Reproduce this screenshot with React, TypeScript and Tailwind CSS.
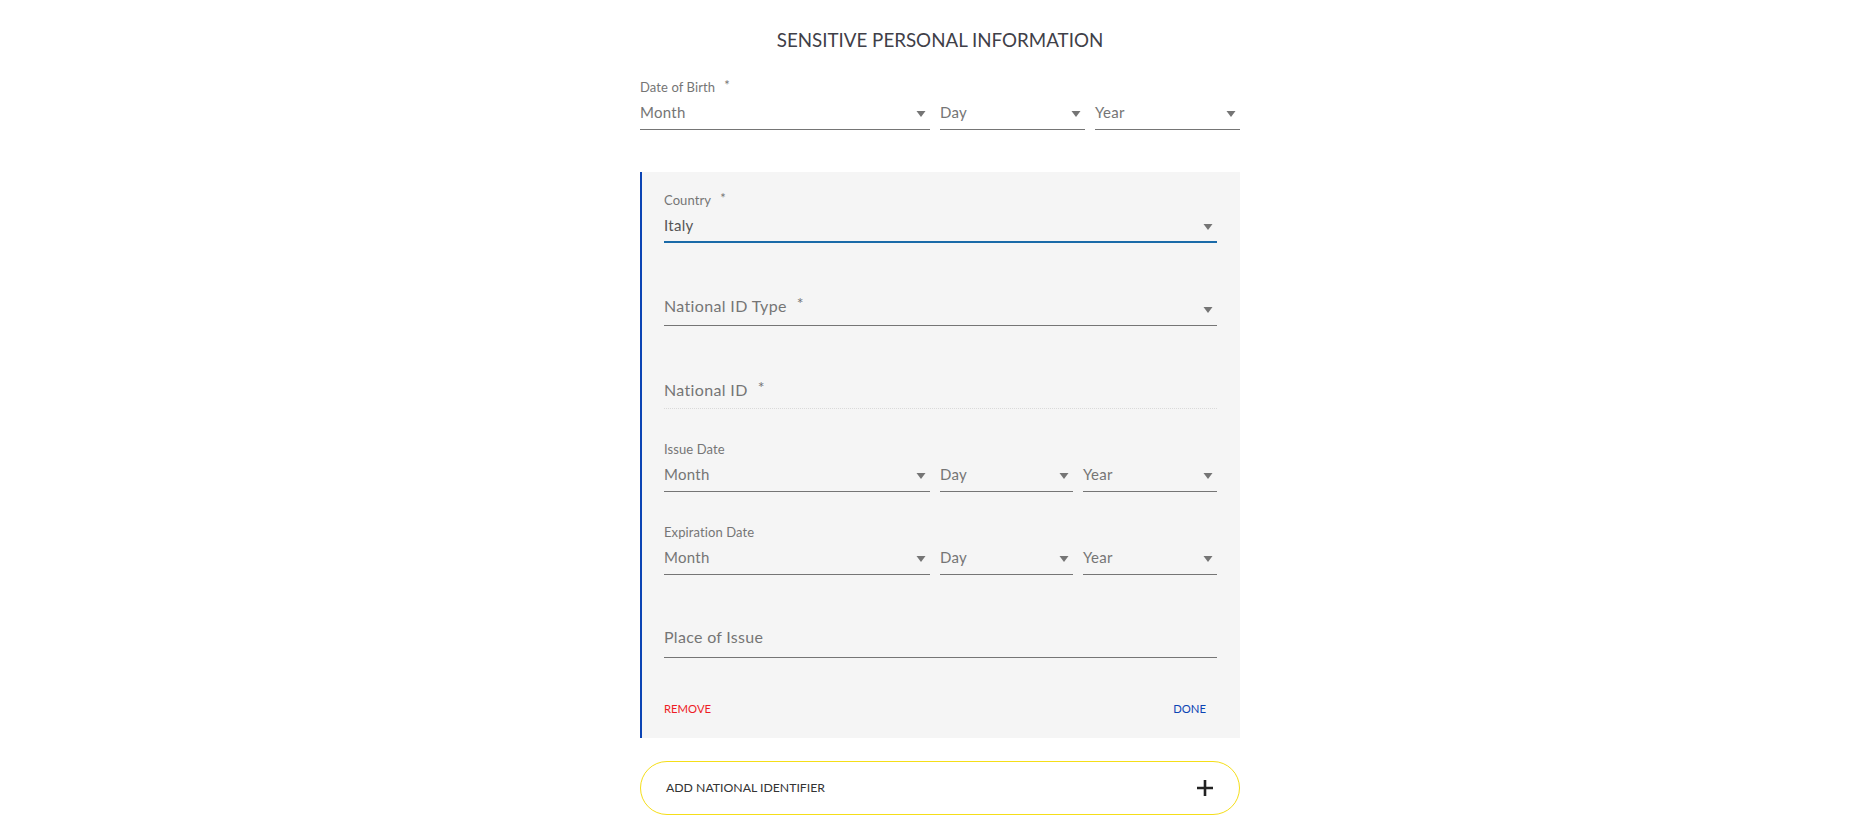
const FONT = "font-['Lato','Open_Sans',sans-serif]";

function Arrow() {
  return (
    <svg width="10" height="6" viewBox="0 0 10 6" className="shrink-0">
      <path d="M0.5 0h9L5 6z" fill="#757575" />
    </svg>
  );
}

function SelectField({ value, className }: { value: string; className?: string }) {
  return (
    <div
      className={`flex h-[34px] items-center justify-between border-b border-[#757575] pb-px text-[15px] text-[#757575] ${className ?? ""}`}
    >
      <span className="tracking-[0.3px]">{value}</span>
      <span className="mr-1 mt-1">
        <Arrow />
      </span>
    </div>
  );
}

function SmallLabel({ text, required }: { text: string; required?: boolean }) {
  return (
    <div className="flex h-[18px] items-center pt-px text-[13px] tracking-[0.1px] text-[#757575]">
      <span>{text}</span>
      {required && <span className="ml-[9px] -mt-1 text-[13px]">*</span>}
    </div>
  );
}

function DateRow({ wide }: { wide?: boolean }) {
  return (
    <div className="flex gap-[10px]">
      <SelectField value="Month" className="flex-1" />
      <SelectField value="Day" className={wide ? "w-[145px]" : "w-[133px]"} />
      <SelectField value="Year" className={wide ? "w-[145px]" : "w-[134px]"} />
    </div>
  );
}

export default function App() {
  return (
    <div className={`flex h-[825px] justify-center overflow-hidden bg-white pl-[13px] ${FONT}`}>
      <div className="w-[600px]">
        <h1 className="pt-[28px] pb-px text-center text-[18.75px] leading-[24px] font-normal text-[#3f4048]">
          SENSITIVE PERSONAL INFORMATION
        </h1>

        <div className="mt-[25px]">
          <SmallLabel text="Date of Birth" required />
          <DateRow wide />
        </div>

        <div className="mt-[42px] h-[566px] border-l-2 border-[#0b44b4] bg-[#f5f5f5] pl-[22px] pr-[23px] pt-[19px]">
          <SmallLabel text="Country" required />
          <div className="flex h-[34px] items-center justify-between border-b-2 border-[#1a6aa8] text-[15px] text-[#555]">
            <span className="tracking-[0.3px]">Italy</span>
            <span className="mr-1 mt-1">
              <Arrow />
            </span>
          </div>

          <div className="mt-[49px] flex h-[34px] justify-between border-b border-[#757575] text-[16px] text-[#757575]">
            <span className="-mt-px tracking-[0.35px]">
              National ID Type<span className="ml-[10px] align-[3px] text-[16px]">*</span>
            </span>
            <span className="mr-1 mt-[15px]">
              <Arrow />
            </span>
          </div>

          <div className="mt-[49px] h-[34px] border-b border-dotted border-[#d9d9d9] text-[16px] text-[#757575]">
            <span className="inline-block tracking-[0.35px]">
              National ID<span className="ml-[10px] align-[3px] text-[16px]">*</span>
            </span>
          </div>

          <div className="mt-[31px]">
            <SmallLabel text="Issue Date" />
            <DateRow />
          </div>

          <div className="mt-[31px]">
            <SmallLabel text="Expiration Date" />
            <DateRow />
          </div>

          <div className="mt-[49px] h-[34px] border-b border-[#757575] text-[16px] text-[#757575]">
            <span className="mt-px inline-block tracking-[0.3px]">Place of Issue</span>
          </div>

          <div className="mt-[43px] flex items-center justify-between pr-[11px] text-[11.3px] leading-[16px]">
            <button className="text-[#ee1c25]">REMOVE</button>
            <button className="text-[#0b44b4]">DONE</button>
          </div>
        </div>

        <button className="mt-[23px] flex h-[54px] w-full items-center justify-between rounded-full border border-[#f5de19] pl-[25px] pr-[25px] text-[12.25px] text-[#333]">
          <span>ADD NATIONAL IDENTIFIER</span>
          <svg width="18" height="18" viewBox="0 0 18 18">
            <path d="M9 1v16M1 9h16" stroke="#222" strokeWidth="2.6" fill="none" />
          </svg>
        </button>
      </div>
    </div>
  );
}
